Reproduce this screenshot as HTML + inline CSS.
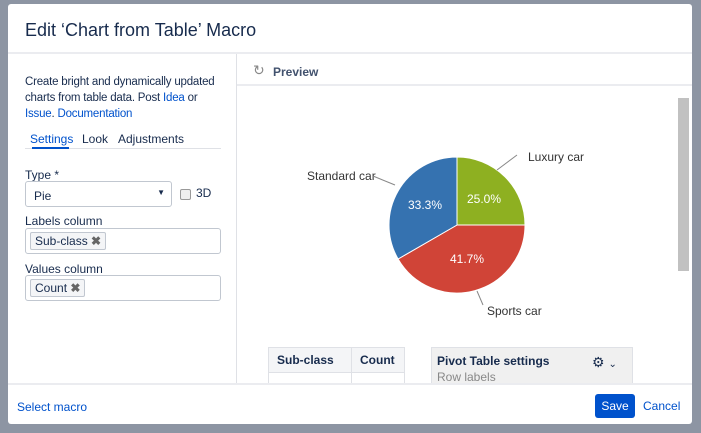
<!DOCTYPE html>
<html><head><style>
body{margin:0;width:701px;height:433px;background:#8d95a3;font-family:"Liberation Sans",sans-serif;position:relative;overflow:hidden;color:#172b4d}
.dlg{position:absolute;left:8px;top:4px;width:684px;height:420px;background:#fff;border-radius:3px;overflow:hidden}
.hd{position:absolute;left:0;top:0;width:684px;height:48px;border-bottom:2px solid #ebecf0}
.hd h1{margin:0;position:absolute;left:17px;top:16px;font-size:18px;font-weight:normal;color:#172b4d}
.left{position:absolute;left:0;top:50px;width:228px;height:329px;border-right:1px solid #dfe1e6}
.right{position:absolute;left:229px;top:50px;width:455px;height:329px;overflow:hidden}
.ft{position:absolute;left:0;top:379px;width:684px;height:41px;border-top:2px solid #ebecf0}
a{color:#0052cc;text-decoration:none}
.p{position:absolute;font-size:12px;line-height:16px;white-space:nowrap}
.inp{position:absolute;left:17px;width:194px;height:24px;border:1px solid #c1c7d0;border-radius:3px;background:#fff}
.tag{position:absolute;left:4px;top:3px;height:16px;padding:0 4px;border:1px solid #c1c7d0;background:#f4f5f7;font-size:12px;line-height:16px;border-radius:2px}
</style></head><body>
<div class="dlg">
<div class="hd"><h1>Edit ‘Chart from Table’ Macro</h1></div>
<div class="left">
<div class="p" style="left:17px;top:20px;font-size:11.5px;letter-spacing:-0.2px">Create bright and dynamically updated<br>charts from table data. Post <a>Idea</a> or<br><a>Issue</a>. <a>Documentation</a></div>
<div class="p" style="left:22px;top:77px;color:#0052cc">Settings</div>
<div class="p" style="left:74px;top:77px">Look</div>
<div class="p" style="left:110px;top:77px">Adjustments</div>
<div style="position:absolute;left:17px;top:94px;width:196px;height:1px;background:#dfe1e6"></div>
<div style="position:absolute;left:24px;top:93px;width:37px;height:2px;background:#0052cc"></div>
<div class="p" style="left:17px;top:113px">Type *</div>
<div class="inp" style="top:127px;width:145px"><span class="p" style="left:8px;top:6px">Pie</span><span style="position:absolute;right:6px;top:6px;font-size:8px">▼</span></div>
<div style="position:absolute;left:172px;top:135px;width:9px;height:9px;border:1px solid #999;background:#eee;border-radius:2px"></div>
<div class="p" style="left:188px;top:131px">3D</div>
<div class="p" style="left:17px;top:159px">Labels column</div>
<div class="inp" style="top:174px"><div class="tag">Sub-class <b style="color:#666">✖</b></div></div>
<div class="p" style="left:17px;top:207px">Values column</div>
<div class="inp" style="top:221px"><div class="tag">Count <b style="color:#666">✖</b></div></div>
</div>
<div class="right">
<div style="position:absolute;left:0;top:0;width:455px;height:30px;border-bottom:2px solid #ebecf0"></div>
<div class="p" style="left:16px;top:8px;color:#888;font-size:14px">↻</div>
<div class="p" style="left:36px;top:10px;font-weight:bold;color:#42526e">Preview</div>
<svg style="position:absolute;left:0;top:32px" width="455" height="300">
<g transform="translate(220,139)">
<path d="M0,0 L0,-68 A68,68 0 0 1 68,0 Z" fill="#8eb021" stroke="#fff"/>
<path d="M0,0 L68,0 A68,68 0 0 1 -58.9,34 Z" fill="#d04437" stroke="#fff"/>
<path d="M0,0 L-58.9,34 A68,68 0 0 1 0,-68 Z" fill="#3572b0" stroke="#fff"/>
<g font-family="Liberation Sans" font-size="12" fill="#fff"><text x="10" y="-22">25.0%</text><text x="-7" y="38">41.7%</text><text x="-49" y="-16">33.3%</text></g>
<g font-family="Liberation Sans" font-size="12" fill="#333"><text x="71" y="-64">Luxury car</text><text x="30" y="90">Sports car</text><text x="-150" y="-45">Standard car</text></g>
<g stroke="#888" fill="none"><path d="M40,-55 L60,-70"/><path d="M20,66 L26,80"/><path d="M-62,-40 L-84,-49"/></g>
</g>
<rect x="441" y="12" width="11" height="173" fill="#c1c1c1"/>
</svg>
<table style="position:absolute;left:31px;top:293px;border-collapse:collapse;font-size:12px;font-weight:bold">
<tr><td style="border:1px solid #dfe1e6;background:#f4f5f7;width:66px;height:24px;padding:0 8px">Sub-class</td><td style="border:1px solid #dfe1e6;background:#f4f5f7;width:36px;padding:0 8px">Count</td></tr>
<tr><td style="border:1px solid #dfe1e6;height:20px"></td><td style="border:1px solid #dfe1e6"></td></tr></table>
<div style="position:absolute;left:194px;top:293px;width:200px;height:40px;background:#f0f0f0;border:1px solid #dfe1e6">
<div class="p" style="left:5px;top:5px;font-weight:bold">Pivot Table settings</div>
<div class="p" style="left:5px;top:21px;color:#888">Row labels</div>
<div class="p" style="left:160px;top:6px;font-size:14px">⚙ <span style="font-size:10px">⌄</span></div></div>
</div>
<div class="ft">
<div class="p" style="left:9px;top:14px;color:#0052cc">Select macro</div>
<div style="position:absolute;left:587px;top:9px;width:40px;height:24px;background:#0052cc;border-radius:3px;color:#fff;font-size:12px;line-height:24px;text-align:center">Save</div>
<div class="p" style="left:635px;top:13px;color:#0052cc">Cancel</div>
</div>
</div>
</body></html>
